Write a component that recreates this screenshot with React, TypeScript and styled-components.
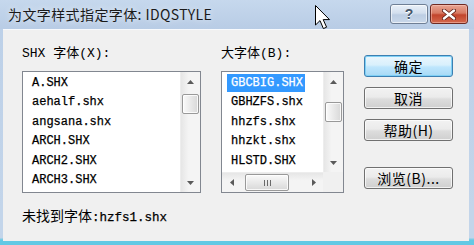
import { createGlobalStyle, styled } from "styled-components"

const GlobalStyle = createGlobalStyle`
  html, body {
    margin: 0;
    padding: 0;
    background: #f0f0f0;
  }
  * {
    box-sizing: border-box;
  }
`

const CJK = `"Noto Sans CJK SC", "Liberation Sans", sans-serif`
const MONO = `"Liberation Mono", "Noto Sans CJK SC", monospace`

const shxFonts = ["A.SHX", "aehalf.shx", "angsana.shx", "ARCH.SHX", "ARCH2.SHX", "ARCH3.SHX"]
const bigFonts = ["GBCBIG.SHX", "GBHZFS.shx", "hhzfs.shx", "hhzkt.shx", "HLSTD.SHX"]

function Arrow({ dir }: { dir: "up" | "down" | "left" | "right" }) {
  const pts = {
    up: "0,4 3.5,0 7,4",
    down: "0,0 3.5,4 7,0",
    left: "4,0 0,3.5 4,7",
    right: "0,0 4,3.5 0,7",
  }[dir]
  const vertical = dir === "up" || dir === "down"
  return (
    <svg width={vertical ? 7 : 4} height={vertical ? 4 : 7} viewBox={vertical ? "0 0 7 4" : "0 0 4 7"}>
      <polygon points={pts} fill="#5a5a5a" />
    </svg>
  )
}

function App() {
  return (
    <>
      <GlobalStyle />
      <Window>
        <TitleBar>
          <Title>为文字样式指定字体: IDQSTYLE</Title>
          <CaptionButtons>
            <HelpButton>?</HelpButton>
            <CloseButton>
              <svg width="14" height="11" viewBox="0 0 14 11">
                <path
                  d="M2 1.5 L12 9.5 M12 1.5 L2 9.5"
                  stroke="#5a1c14"
                  strokeWidth="4"
                  strokeLinecap="round"
                />
                <path
                  d="M2 1.5 L12 9.5 M12 1.5 L2 9.5"
                  stroke="#ffffff"
                  strokeWidth="2.4"
                  strokeLinecap="round"
                />
              </svg>
            </CloseButton>
          </CaptionButtons>
        </TitleBar>
        <Body>
          <Columns>
            <Column>
              <Label>SHX 字体(X):</Label>
              <ListBox>
                <ListArea>
                  <Items>
                    {shxFonts.map((f) => (
                      <Row key={f}>
                        <Item>{f}</Item>
                      </Row>
                    ))}
                  </Items>
                  <VScroll>
                    <ArrowCell>
                      <Arrow dir="up" />
                    </ArrowCell>
                    <VTrack>
                      <VThumb $offset={3} />
                    </VTrack>
                    <ArrowCell>
                      <Arrow dir="down" />
                    </ArrowCell>
                  </VScroll>
                </ListArea>
              </ListBox>
            </Column>
            <Column>
              <Label>大字体(B):</Label>
              <ListBox>
                <ListArea>
                  <Items>
                    {bigFonts.map((f, i) => (
                      <Row key={f}>
                        <Item $selected={i === 0}>{f}</Item>
                      </Row>
                    ))}
                  </Items>
                  <VScroll>
                    <ArrowCell>
                      <Arrow dir="up" />
                    </ArrowCell>
                    <VTrack>
                      <VThumb $offset={11} />
                    </VTrack>
                    <ArrowCell>
                      <Arrow dir="down" />
                    </ArrowCell>
                  </VScroll>
                </ListArea>
                <HScrollRow>
                  <HScroll>
                    <HArrowCell>
                      <Arrow dir="left" />
                    </HArrowCell>
                    <HTrack>
                      <HThumb>
                        <Grip />
                        <Grip />
                        <Grip />
                      </HThumb>
                    </HTrack>
                    <HArrowCell>
                      <Arrow dir="right" />
                    </HArrowCell>
                  </HScroll>
                  <Corner />
                </HScrollRow>
              </ListBox>
            </Column>
            <ButtonColumn>
              <Button $default>确定</Button>
              <Button>取消</Button>
              <Button>帮助(H)</Button>
              <Button $gapBefore>浏览(B)...</Button>
            </ButtonColumn>
          </Columns>
          <Status>
            未找到字体<Mono>:hzfs1.shx</Mono>
          </Status>
        </Body>
        <Cursor width="16" height="25" viewBox="0 0 16 25">
          <polygon
            points="0.5,0.5 0.5,20 5,15.6 8.4,23.6 11.6,22.2 8.2,14.6 14.5,14.6"
            fill="#ffffff"
            stroke="#000000"
            strokeWidth="1"
            strokeLinejoin="round"
          />
        </Cursor>
      </Window>
    </>
  )
}

export default App

const Window = styled.div`
  position: relative;
  width: 474px;
  height: 245px;
  display: flex;
  flex-direction: column;
  background: linear-gradient(to bottom, #bcd0e8 0%, #c3d5ea 85%, #c3d5ea 97%, #62c9e4 98%, #62c9e4 100%);
  overflow: hidden;
`

const TitleBar = styled.div`
  height: 29px;
  display: flex;
  align-items: flex-start;
  justify-content: space-between;
  padding: 0 6px 0 8px;
  background: linear-gradient(to bottom, #c6d8ed 0%, #b8cce5 100%);
`

const Title = styled.div`
  font-family: ${CJK};
  font-size: 14px;
  line-height: 29px;
  color: #1a1a1a;
  letter-spacing: 0.4px;
  text-shadow: 0 0 6px rgba(255, 255, 255, 0.8);
`

const CaptionButtons = styled.div`
  display: flex;
  gap: 2px;
  padding-top: 4px;
`

const HelpButton = styled.div`
  width: 38px;
  height: 20px;
  border: 1px solid #6f7f95;
  border-radius: 3px;
  background: linear-gradient(to bottom, #e9f0f8 0%, #d3dfee 45%, #bccde3 55%, #c9d8ea 100%);
  box-shadow: inset 0 0 0 1px rgba(255, 255, 255, 0.6);
  display: flex;
  align-items: center;
  justify-content: center;
  font-family: "Liberation Sans", sans-serif;
  font-weight: bold;
  font-size: 14px;
  color: #46566b;
  text-shadow: 0 1px 0 #fff;
`

const CloseButton = styled.div`
  width: 38px;
  height: 20px;
  border: 1px solid #6e2a22;
  border-radius: 3px;
  background: linear-gradient(to bottom, #e8a593 0%, #d77a63 45%, #c2442c 55%, #d4694d 100%);
  box-shadow: inset 0 0 0 1px rgba(255, 210, 200, 0.45);
  display: flex;
  align-items: center;
  justify-content: center;
`

const Body = styled.div`
  flex: 1;
  margin: 0 5px 4px 3px;
  background: #f0f0f0;
  border-top: 1px solid #f8fafd;
  padding: 15px 0 0 19px;
  display: flex;
  flex-direction: column;
`

const Columns = styled.div`
  display: grid;
  grid-template-columns: 179px 123px 89px;
  column-gap: 20px;
  align-items: start;
`

const Column = styled.div`
  display: flex;
  flex-direction: column;
`

const Label = styled.div`
  font-family: ${MONO};
  font-size: 13px;
  line-height: 18px;
  height: 18px;
  margin-bottom: 8px;
  color: #000;
`

const ListBox = styled.div`
  height: 122px;
  border: 1px solid #828790;
  background: #fff;
  display: flex;
  flex-direction: column;
`

const ListArea = styled.div`
  flex: 1;
  display: flex;
  min-height: 0;
`

const Items = styled.div`
  flex: 1;
  padding-top: 1px;
  overflow: hidden;
`

const Row = styled.div`
  height: 19.5px;
  display: flex;
  align-items: center;
`

const Item = styled.span<{ $selected?: boolean }>`
  margin-left: 5px;
  padding: 0 2px 0 4px;
  height: 18px;
  line-height: 18px;
  font-family: ${MONO};
  font-size: 12px;
  -webkit-text-stroke: 0.25px ${(p) => (p.$selected ? "#fff" : "#000")};
  color: ${(p) => (p.$selected ? "#fff" : "#000")};
  background: ${(p) => (p.$selected ? "#3399ff" : "transparent")};
  white-space: nowrap;
`

const VScroll = styled.div`
  width: 20px;
  display: flex;
  flex-direction: column;
  background: linear-gradient(to right, #e6e6e6 0%, #f4f4f4 40%, #f4f4f4 100%);
  border-left: 1px solid #ededed;
`

const ArrowCell = styled.div`
  height: 19px;
  display: flex;
  align-items: center;
  justify-content: center;
`

const VTrack = styled.div`
  flex: 1;
  display: flex;
  flex-direction: column;
  align-items: center;
`

const VThumb = styled.div<{ $offset: number }>`
  margin-top: ${(p) => p.$offset}px;
  width: 17px;
  height: 20px;
  border: 1px solid #999;
  border-radius: 2px;
  background: linear-gradient(to right, #fafafa 0%, #e9e9e9 50%, #d8d8d8 100%);
  box-shadow: inset 0 0 0 1px rgba(255, 255, 255, 0.8);
`

const HScrollRow = styled.div`
  height: 20px;
  display: flex;
`

const HScroll = styled.div`
  flex: 1;
  display: flex;
  background: linear-gradient(to bottom, #e6e6e6 0%, #f4f4f4 40%, #f4f4f4 100%);
  border-top: 1px solid #ededed;
`

const HArrowCell = styled.div`
  width: 19px;
  display: flex;
  align-items: center;
  justify-content: center;
`

const HTrack = styled.div`
  flex: 1;
  display: flex;
  align-items: center;
  padding-left: 4px;
`

const HThumb = styled.div`
  width: 44px;
  height: 17px;
  border: 1px solid #999;
  border-radius: 2px;
  background: linear-gradient(to bottom, #fafafa 0%, #e9e9e9 50%, #d8d8d8 100%);
  box-shadow: inset 0 0 0 1px rgba(255, 255, 255, 0.8);
  display: flex;
  align-items: center;
  justify-content: center;
  gap: 2px;
`

const Grip = styled.div`
  width: 1px;
  height: 6px;
  background: #6a6a6a;
`

const Corner = styled.div`
  width: 20px;
  background: #f0f0f0;
`

const ButtonColumn = styled.div`
  display: flex;
  flex-direction: column;
  gap: 10px;
  padding-top: 10px;
`

const Button = styled.div<{ $default?: boolean; $gapBefore?: boolean }>`
  height: 22px;
  margin-top: ${(p) => (p.$gapBefore ? "16px" : "0")};
  border: 1px solid ${(p) => (p.$default ? "#3c7fb1" : "#707070")};
  border-radius: 3px;
  background: ${(p) =>
    p.$default
      ? "linear-gradient(to bottom, #eaf6fd 0%, #d9f0fc 45%, #bee6fd 55%, #a7d9f5 100%)"
      : "linear-gradient(to bottom, #f2f2f2 0%, #ebebeb 45%, #dddddd 55%, #cfcfcf 100%)"};
  box-shadow: ${(p) =>
    p.$default ? "inset 0 0 0 1px #7fd0f5" : "inset 0 0 0 1px rgba(255, 255, 255, 0.7)"};
  display: flex;
  align-items: center;
  justify-content: center;
  font-family: ${CJK};
  font-size: 14px;
  color: #000;
  letter-spacing: 0.5px;
`

const Status = styled.div`
  margin-top: 13px;
  font-family: ${CJK};
  font-size: 14px;
  line-height: 18px;
  color: #000;
`

const Mono = styled.span`
  font-family: ${MONO};
  font-size: 12.5px;
  -webkit-text-stroke: 0.25px #000;
`

const Cursor = styled.svg`
  position: absolute;
  left: 315px;
  top: 5px;
`
